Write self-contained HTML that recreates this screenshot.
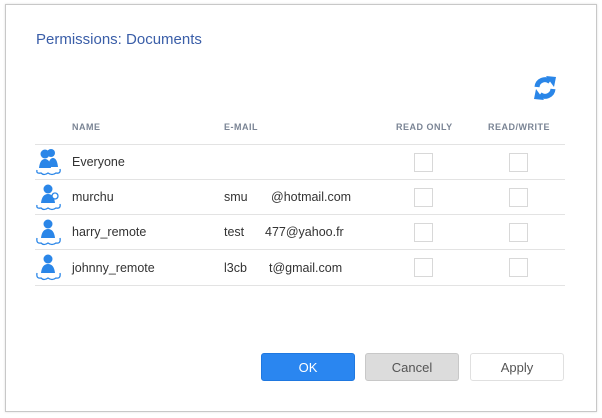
<!DOCTYPE html>
<html><head><style>
body{margin:0;width:602px;height:418px;background:#fff;font-family:"Liberation Sans",sans-serif;position:relative;overflow:hidden}
.dlg{position:absolute;left:5px;top:4px;width:590px;height:406px;border:1px solid #c8c8c8;box-shadow:0 0 2px #ddd}
.t{position:absolute;left:36px;top:31px;font-size:15px;color:#3a5ea8}
.h{position:absolute;top:122px;font-size:9px;font-weight:bold;color:#7a8494;letter-spacing:.5px}
.ln{position:absolute;left:35px;width:530px;height:1px;background:#e3e3e3}
.tx{position:absolute;font-size:12.5px;color:#333}
.cb{position:absolute;width:17px;height:17px;border:1px solid #d8d8d8;background:#fff}
.ic{position:absolute;left:35px}
.btn{position:absolute;top:353px;width:94px;height:28px;border-radius:3px;font-size:13px;text-align:center;line-height:28px;box-sizing:border-box}
</style></head><body>
<div class="dlg"></div>
<div class="t">Permissions: Documents</div>
<svg style="position:absolute;left:533px;top:75px" width="24" height="26" viewBox="0 0 24 26">
<path d="M4 12 A8 8 0 0 1 17 6.5" fill="none" stroke="#2a86e8" stroke-width="5"/>
<path d="M13 1 L23 2 L21 12 Z" fill="#2a86e8"/>
<path d="M20 14 A8 8 0 0 1 7 19.5" fill="none" stroke="#2a86e8" stroke-width="5"/>
<path d="M11 25 L1 24 L3 14 Z" fill="#2a86e8"/>
</svg>
<div class="h" style="left:72px">NAME</div>
<div class="h" style="left:224px">E-MAIL</div>
<div class="h" style="left:396px">READ ONLY</div>
<div class="h" style="left:488px">READ/WRITE</div>
<div class="ln" style="top:144px"></div>
<div class="ln" style="top:179px"></div>
<div class="ln" style="top:214px"></div>
<div class="ln" style="top:249px"></div>
<div class="ln" style="top:285px"></div>

<svg class="ic" style="top:148px" width="28" height="28" viewBox="0 0 28 28"><circle cx="10" cy="6" r="4.5" fill="#2a86e8"/><circle cx="16" cy="5" r="4" fill="#2a86e8"/><path d="M4 20 Q5 11 10 11 Q15 11 16 20Z M13 19 Q14 10 18 10 Q22 10 23 19Z" fill="#2a86e8"/><path d="M2 22 Q1 26 6 25 Q9 28 13 25 Q17 28 21 25 Q26 26 25 21" fill="none" stroke="#2a86e8" stroke-width="1.3"/></svg>
<svg class="ic" style="top:183px" width="28" height="28" viewBox="0 0 28 28"><circle cx="13" cy="6" r="4.5" fill="#2a86e8"/><path d="M6 20 Q7 11 13 11 Q19 11 20 20Z" fill="#2a86e8"/><circle cx="20" cy="13" r="3" fill="#fff" stroke="#2a86e8" stroke-width="1.3"/><path d="M2 22 Q1 26 6 25 Q9 28 13 25 Q17 28 21 25 Q26 26 25 21" fill="none" stroke="#2a86e8" stroke-width="1.3"/></svg>
<svg class="ic" style="top:218px" width="28" height="28" viewBox="0 0 28 28"><circle cx="13" cy="6" r="4.5" fill="#2a86e8"/><path d="M6 20 Q7 11 13 11 Q19 11 20 20Z" fill="#2a86e8"/><path d="M2 20 Q1 26 6 25 Q9 28 13 25 Q17 28 21 25 Q26 26 25 20" fill="none" stroke="#2a86e8" stroke-width="1.3"/></svg>
<svg class="ic" style="top:253px" width="28" height="28" viewBox="0 0 28 28"><circle cx="13" cy="6" r="4.5" fill="#2a86e8"/><path d="M6 20 Q7 11 13 11 Q19 11 20 20Z" fill="#2a86e8"/><path d="M2 20 Q1 26 6 25 Q9 28 13 25 Q17 28 21 25 Q26 26 25 20" fill="none" stroke="#2a86e8" stroke-width="1.3"/></svg>

<div class="tx" style="left:72px;top:155px">Everyone</div>
<div class="tx" style="left:72px;top:190px">murchu</div>
<div class="tx" style="left:224px;top:190px">smu</div>
<div class="tx" style="left:271px;top:190px">@hotmail.com</div>
<div class="tx" style="left:72px;top:225px">harry_remote</div>
<div class="tx" style="left:224px;top:225px">test</div>
<div class="tx" style="left:265px;top:225px">477@yahoo.fr</div>
<div class="tx" style="left:72px;top:261px">johnny_remote</div>
<div class="tx" style="left:224px;top:261px">l3cb</div>
<div class="tx" style="left:269px;top:261px">t@gmail.com</div>

<div class="cb" style="left:414px;top:153px"></div><div class="cb" style="left:509px;top:153px"></div>
<div class="cb" style="left:414px;top:188px"></div><div class="cb" style="left:509px;top:188px"></div>
<div class="cb" style="left:414px;top:223px"></div><div class="cb" style="left:509px;top:223px"></div>
<div class="cb" style="left:414px;top:258px"></div><div class="cb" style="left:509px;top:258px"></div>

<div class="btn" style="left:261px;background:#2a86f0;color:#fff;border:1px solid #1f78e0">OK</div>
<div class="btn" style="left:365px;background:#dcdcdc;color:#555;border:1px solid #c8c8c8">Cancel</div>
<div class="btn" style="left:470px;background:#fff;color:#555;border:1px solid #e0e0e0">Apply</div>
</body></html>
